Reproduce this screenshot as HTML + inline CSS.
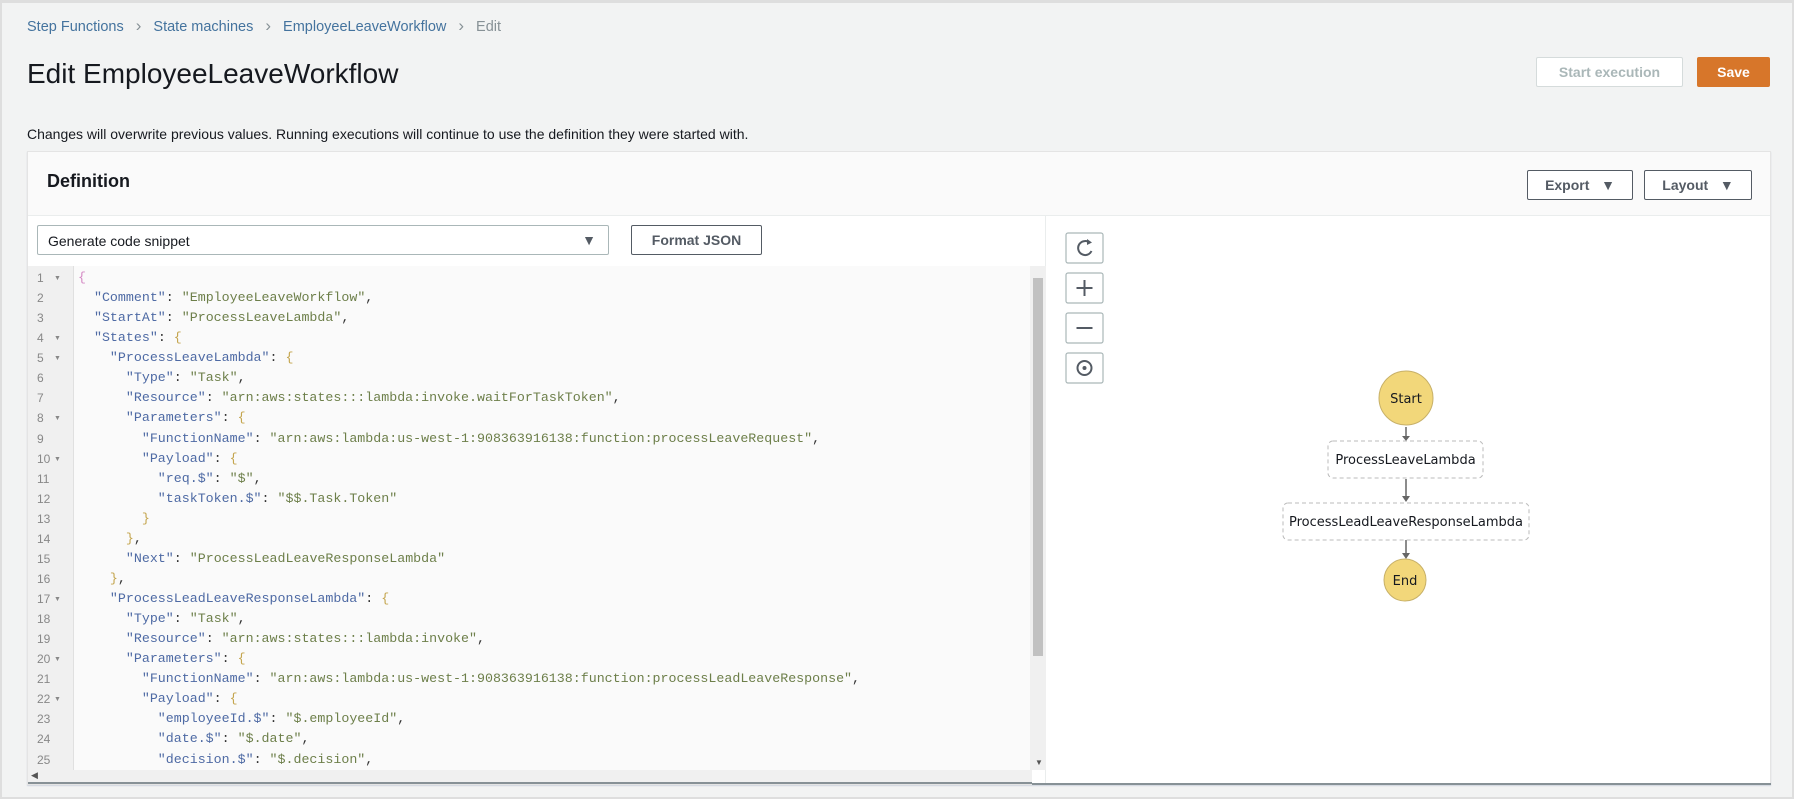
<!DOCTYPE html>
<html><head><meta charset="utf-8"><style>
*{box-sizing:border-box;margin:0;padding:0}
body{width:1794px;height:799px;background:#f2f3f3;font-family:"Liberation Sans",sans-serif;position:relative;overflow:hidden;border:2px solid #dedede;border-top-width:3px}
.abs{position:absolute}
.bc{top:13px;left:25px;font-size:14.5px;color:#44739e;white-space:nowrap}
.bc span.sep{color:#879196;margin:0 12px;font-size:17px}
.bc span.cur{color:#879196}
h1{position:absolute;left:25px;top:55px;font-size:28px;font-weight:normal;color:#16191f}
.desc{left:25px;top:123px;font-size:14px;color:#16191f}
.btn{position:absolute;border:1px solid #545b64;background:#fff;font-weight:bold;font-size:14px;color:#545b64;display:flex;align-items:center;justify-content:center;border-radius:2px}
.panel{left:25px;top:148px;width:1744px;height:634px;background:#fff;border:1px solid #e4e4e4;box-shadow:0 1px 1px rgba(0,43,102,.15)}
.ph{position:absolute;left:0;top:0;width:100%;height:64px;background:#fafafa;border-bottom:1px solid #eaeded}
.ph b{position:absolute;left:19px;top:19px;font-size:18px;color:#16191f}
.code{position:absolute;left:0;top:114px;width:1004px;height:504px;background:#fafafa;overflow:hidden}
.gut{position:absolute;left:0;top:0;width:46px;height:504px;background:#f0f0f0;border-right:1px solid #e0e0e0}
pre{font-family:"Liberation Mono",monospace;font-size:13.3px;line-height:20.07px}
.ln{position:absolute;left:0;top:2px;width:46px;color:#888;font-family:"Liberation Sans",sans-serif;font-size:12px}
.ln div{height:20.07px;line-height:20.07px;padding-left:9px;position:relative}
.ln div.f::after{content:"▼";position:absolute;left:26px;top:1px;font-size:7px}
.src{position:absolute;left:50px;top:2px;color:#333}
.k{color:#4e6aa4}.s{color:#6d7f4a}.p{color:#c4a54e}
</style></head><body>
<div class="abs bc">Step Functions<span class="sep">&#x203A;</span>State machines<span class="sep">&#x203A;</span>EmployeeLeaveWorkflow<span class="sep">&#x203A;</span><span class="cur">Edit</span></div>
<h1>Edit EmployeeLeaveWorkflow</h1>
<div class="btn" style="left:1534px;top:54px;width:147px;height:30px;border-color:#d5dbdb;color:#aab7b8">Start execution</div>
<div class="btn" style="left:1695px;top:54px;width:73px;height:30px;background:#d7762a;border-color:#d7762a;color:#fff">Save</div>
<div class="abs desc">Changes will overwrite previous values. Running executions will continue to use the definition they were started with.</div>
<div class="abs panel">
 <div class="ph"><b>Definition</b></div>
 <div class="btn" style="left:1499px;top:18px;width:106px;height:30px">Export&nbsp;&nbsp;&nbsp;▼</div>
 <div class="btn" style="left:1616px;top:18px;width:108px;height:30px">Layout&nbsp;&nbsp;&nbsp;▼</div>
 <div style="position:absolute;left:9px;top:73px;width:572px;height:30px;border:1px solid #aab7b8;border-radius:2px;font-size:14px;color:#16191f;padding:7px 10px">Generate code snippet<span style="position:absolute;right:12px;top:6px;color:#545b64">▼</span></div>
 <div class="btn" style="left:603px;top:73px;width:131px;height:30px">Format JSON</div>
 <div style="position:absolute;left:1017px;top:64px;width:1px;height:569px;background:#eaeded"></div>
 <div class="code">
  <div class="gut"></div>
  <div class="ln"><div class="f">1</div><div>2</div><div>3</div><div class="f">4</div><div class="f">5</div><div>6</div><div>7</div><div class="f">8</div><div>9</div><div class="f">10</div><div>11</div><div>12</div><div>13</div><div>14</div><div>15</div><div>16</div><div class="f">17</div><div>18</div><div>19</div><div class="f">20</div><div>21</div><div class="f">22</div><div>23</div><div>24</div><div>25</div></div>
<pre class="src"><span style="color:#d48ac4">{</span>
  <span class="k">"Comment"</span>: <span class="s">"EmployeeLeaveWorkflow"</span>,
  <span class="k">"StartAt"</span>: <span class="s">"ProcessLeaveLambda"</span>,
  <span class="k">"States"</span>: <span class="p">{</span>
    <span class="k">"ProcessLeaveLambda"</span>: <span class="p">{</span>
      <span class="k">"Type"</span>: <span class="s">"Task"</span>,
      <span class="k">"Resource"</span>: <span class="s">"arn:aws:states:::lambda:invoke.waitForTaskToken"</span>,
      <span class="k">"Parameters"</span>: <span class="p">{</span>
        <span class="k">"FunctionName"</span>: <span class="s">"arn:aws:lambda:us-west-1:908363916138:function:processLeaveRequest"</span>,
        <span class="k">"Payload"</span>: <span class="p">{</span>
          <span class="k">"req.$"</span>: <span class="s">"$"</span>,
          <span class="k">"taskToken.$"</span>: <span class="s">"$$.Task.Token"</span>
        <span class="p">}</span>
      <span class="p">}</span>,
      <span class="k">"Next"</span>: <span class="s">"ProcessLeadLeaveResponseLambda"</span>
    <span class="p">}</span>,
    <span class="k">"ProcessLeadLeaveResponseLambda"</span>: <span class="p">{</span>
      <span class="k">"Type"</span>: <span class="s">"Task"</span>,
      <span class="k">"Resource"</span>: <span class="s">"arn:aws:states:::lambda:invoke"</span>,
      <span class="k">"Parameters"</span>: <span class="p">{</span>
        <span class="k">"FunctionName"</span>: <span class="s">"arn:aws:lambda:us-west-1:908363916138:function:processLeadLeaveResponse"</span>,
        <span class="k">"Payload"</span>: <span class="p">{</span>
          <span class="k">"employeeId.$"</span>: <span class="s">"$.employeeId"</span>,
          <span class="k">"date.$"</span>: <span class="s">"$.date"</span>,
          <span class="k">"decision.$"</span>: <span class="s">"$.decision"</span>,</pre>
 </div>
 <div style="position:absolute;left:1002px;top:114px;width:16px;height:504px;background:#f0f0f0"></div>
 <div style="position:absolute;left:1005px;top:126px;width:10px;height:378px;background:#c1c1c1"></div>
 <div style="position:absolute;left:1007px;top:606px;font-size:8px;color:#555">▼</div>
 <div style="position:absolute;left:0;top:618px;width:1004px;height:14px;background:#f0f0f0;border-bottom:2px solid #879196"></div>
 <div style="position:absolute;left:3px;top:618px;font-size:9px;color:#555">◀</div>
 <div style="position:absolute;left:1004px;top:631px;width:739px;height:2px;background:#879196"></div>
 <svg style="position:absolute;left:1018px;top:64px" width="725" height="566">
  <g fill="#fff" stroke="#aab7b8" stroke-width="1.2">
   <rect x="20" y="17" width="37" height="30" rx="2"/>
   <rect x="20" y="57" width="37" height="30" rx="2"/>
   <rect x="20" y="97" width="37" height="30" rx="2"/>
   <rect x="20" y="137" width="37" height="30" rx="2"/>
  </g>
  <g fill="none" stroke="#545b64" stroke-width="2">
   <path d="M44 27 A7 7 0 1 0 45.5 35"/>
   <path d="M38.5 64 V80 M30.5 72 H46.5"/>
   <path d="M30.5 112 H46.5"/>
   <circle cx="38.5" cy="152" r="7"/>
  </g>
  <path d="M41 23 L46 26.5 L41 29 Z" fill="#545b64"/>
  <circle cx="38.5" cy="152" r="2" fill="#545b64"/>
  <g transform="translate(-29,48)">
  <g stroke="#666" stroke-width="1.5"><path d="M389 163 V173 M389 215 V233 M389 276 V290"/></g>
  <g fill="#666"><path d="M385 172 L393 172 L389 177Z M385 232 L393 232 L389 238Z M385 289 L393 289 L389 295Z"/></g>
  <circle cx="389" cy="134" r="27" fill="#f2d77a" stroke="#c7b068"/>
  <circle cx="388" cy="316" r="21" fill="#f2d77a" stroke="#c7b068"/>
  <rect x="311" y="177" width="155" height="37" rx="5" fill="#fff" stroke="#bbb" stroke-dasharray="4 3"/>
  <rect x="266" y="239" width="246" height="37" rx="5" fill="#fff" stroke="#bbb" stroke-dasharray="4 3"/>
  <g font-family="DejaVu Sans,sans-serif" font-size="13" fill="#16191f" text-anchor="middle">
   <text x="389" y="139">Start</text>
   <text x="388.5" y="200">ProcessLeaveLambda</text>
   <text x="389" y="262">ProcessLeadLeaveResponseLambda</text>
   <text x="388" y="321">End</text>
  </g>
  </g>
 </svg>
</div>
</body></html>
